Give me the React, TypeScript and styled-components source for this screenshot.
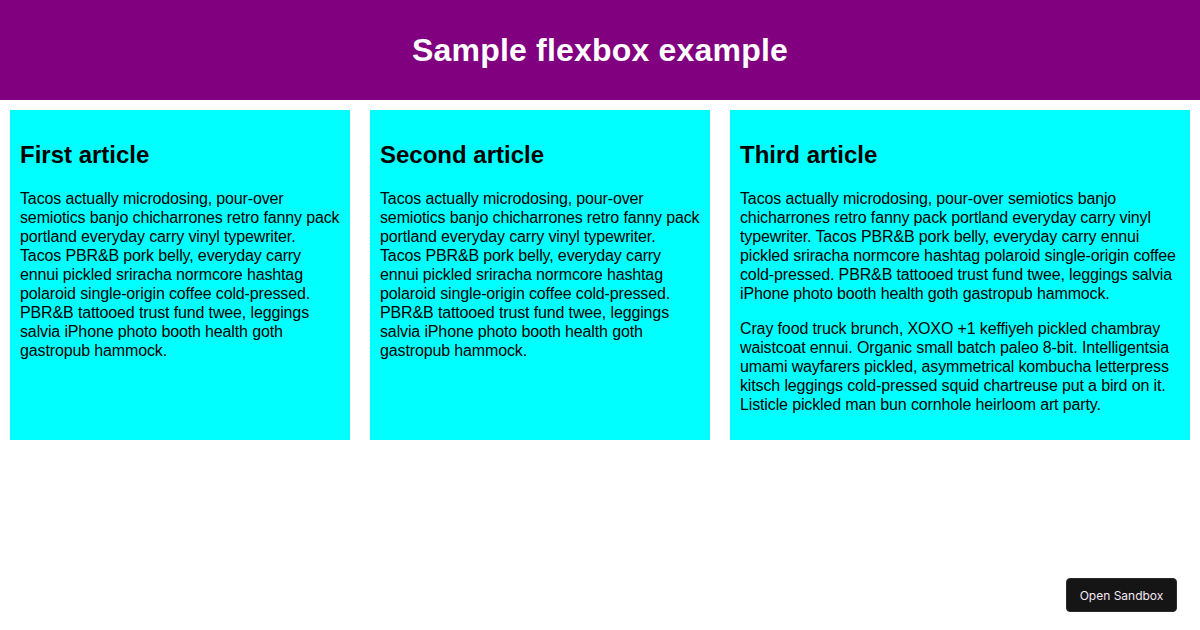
import styled, { createGlobalStyle } from 'styled-components'

const GlobalStyle = createGlobalStyle`
  html, body {
    margin: 0;
    padding: 0;
    background: #ffffff;
  }
  body {
    font-family: "Liberation Sans", Arial, Helvetica, sans-serif;
    font-size: 16px;
    color: #000000;
  }
`

const Header = styled.header`
  background: #800080;
  height: 100px;
  display: flex;
  align-items: center;
  justify-content: center;
`

const Title = styled.h1`
  margin: 0;
  color: #ffffff;
  font-size: 32px;
  font-weight: bold;
  letter-spacing: 0.2px;
`

const Section = styled.section`
  display: flex;
`

const Article = styled.article<{ $basis: number }>`
  flex: 1 1 ${p => p.$basis}px;
  margin: 10px;
  padding: 10px;
  background: #00ffff;

  h2 {
    font-size: 24px;
    margin: 21px 0 19.9px;
  }

  p {
    margin: 16px 0;
    line-height: 19px;
    letter-spacing: -0.135px;
  }
`

const SandboxButton = styled.button`
  position: fixed;
  right: 23px;
  bottom: 18px;
  width: 111px;
  height: 34px;
  background: #151515;
  color: #f5e9f5;
  border: 1px solid #2b2b2b;
  border-radius: 4px;
  font-family: Inter, "Liberation Sans", sans-serif;
  font-size: 12px;
  cursor: pointer;
`

const text1 =
  'Tacos actually microdosing, pour-over semiotics banjo chicharrones retro fanny pack portland everyday carry vinyl typewriter. Tacos PBR&B pork belly, everyday carry ennui pickled sriracha normcore hashtag polaroid single-origin coffee cold-pressed. PBR&B tattooed trust fund twee, leggings salvia iPhone photo booth health goth gastropub hammock.'

const text2 =
  'Cray food truck brunch, XOXO +1 keffiyeh pickled chambray waistcoat ennui. Organic small batch paleo 8-bit. Intelligentsia umami wayfarers pickled, asymmetrical kombucha letterpress kitsch leggings cold-pressed squid chartreuse put a bird on it. Listicle pickled man bun cornhole heirloom art party.'

function App() {
  return (
    <>
      <GlobalStyle />
      <Header>
        <Title>Sample flexbox example</Title>
      </Header>
      <Section>
        <Article $basis={320}>
          <h2>First article</h2>
          <p>{text1}</p>
        </Article>
        <Article $basis={320}>
          <h2>Second article</h2>
          <p>{text1}</p>
        </Article>
        <Article $basis={440}>
          <h2>Third article</h2>
          <p>{text1}</p>
          <p>{text2}</p>
        </Article>
      </Section>
      <SandboxButton>Open Sandbox</SandboxButton>
    </>
  )
}

export default App
